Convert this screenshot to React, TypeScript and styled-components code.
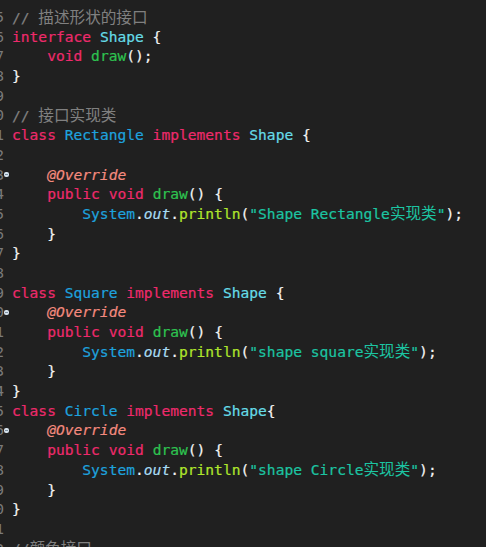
import React from "react";
import styled, { createGlobalStyle } from "styled-components";

const Global = createGlobalStyle`
  html, body { margin: 0; padding: 0; background: #202020; }
  body { overflow: hidden; }
`;

type Kind =
  | "plain"
  | "comment"
  | "keyword"
  | "iface"
  | "cls"
  | "method"
  | "anno"
  | "field"
  | "call"
  | "str";

const colors: Record<Kind, string> = {
  plain: "#f4f4f4",
  comment: "#808080",
  keyword: "#ee2a6c",
  iface: "#66dce8",
  cls: "#1ea2de",
  method: "#2ec350",
  anno: "#f48a7e",
  field: "#a8dcf4",
  call: "#afe62c",
  str: "#1cc4a2",
};

const Editor = styled.div`
  width: 486px;
  height: 547px;
  overflow: hidden;
  background: #202020;
  padding-top: 7px;
  box-sizing: border-box;
  font-family: "DejaVu Sans Mono", "Liberation Mono", "Noto Sans CJK SC", monospace;
  font-size: 14.6px;
`;

const Row = styled.div`
  display: flex;
  align-items: center;
  height: 19.7px;
  line-height: 19.7px;
`;

const LineNo = styled.div`
  width: 4px;
  display: flex;
  justify-content: flex-end;
  overflow: hidden;
  color: #7a7a7a;
  flex: none;
`;

const FoldSlot = styled.div`
  width: 8px;
  height: 100%;
  display: flex;
  align-items: center;
  flex: none;
`;

const FoldMark = styled.span`
  width: 5px;
  height: 5px;
  border-radius: 2px;
  background: #d6e2ec;
  display: flex;
  align-items: center;
  justify-content: center;
  margin-top: 1px;
  &::after {
    content: "";
    width: 3px;
    height: 1px;
    background: #7c8fa0;
  }
`;

const Code = styled.div`
  white-space: pre;
  color: ${colors.plain};
  -webkit-text-stroke: 0.2px currentColor;
`;

const Tok = styled.span<{ $kind: Kind; $italic?: boolean }>`
  color: ${(p) => colors[p.$kind]};
  font-style: ${(p) => (p.$italic ? "italic" : "normal")};
`;

const Cjk = styled.span`
  font-family: "Noto Sans CJK SC", sans-serif;
  font-size: 15.6px;
  -webkit-text-stroke: 0;
`;

type Piece = [Kind, string] | [Kind, string, "i"] | [Kind, string, "cjk"];

const k = (s: string): Piece => ["keyword", s];
const p = (s: string): Piece => ["plain", s];

const printLine = (before: string, after: string): Piece[] => [
  p("        "),
  ["cls", "System"],
  p("."),
  ["field", "out", "i"],
  p("."),
  ["call", "println"],
  p("("),
  ["str", '"' + before],
  ["str", after, "cjk"],
  ["str", '"'],
  p(");"),
];

const overrideLine: Piece[] = [p("    "), ["anno", "@Override", "i"]];
const publicLine: Piece[] = [p("    "), k("public"), p(" "), k("void"), p(" "), ["method", "draw"], p("() {")];

const lines: { n: number; fold?: boolean; code: Piece[] }[] = [
  { n: 15, code: [["comment", "// "], ["comment", "描述形状的接口", "cjk"]] },
  { n: 16, code: [k("interface"), p(" "), ["iface", "Shape"], p(" {")] },
  { n: 17, code: [p("    "), k("void"), p(" "), ["method", "draw"], p("();")] },
  { n: 18, code: [p("}")] },
  { n: 19, code: [] },
  { n: 20, code: [["comment", "// "], ["comment", "接口实现类", "cjk"]] },
  { n: 21, code: [k("class"), p(" "), ["cls", "Rectangle"], p(" "), k("implements"), p(" "), ["iface", "Shape"], p(" {")] },
  { n: 22, code: [] },
  { n: 23, fold: true, code: overrideLine },
  { n: 24, code: publicLine },
  { n: 25, code: printLine("Shape Rectangle", "实现类") },
  { n: 26, code: [p("    }")] },
  { n: 27, code: [p("}")] },
  { n: 28, code: [] },
  { n: 29, code: [k("class"), p(" "), ["cls", "Square"], p(" "), k("implements"), p(" "), ["iface", "Shape"], p(" {")] },
  { n: 30, fold: true, code: overrideLine },
  { n: 31, code: publicLine },
  { n: 32, code: printLine("shape square", "实现类") },
  { n: 33, code: [p("    }")] },
  { n: 34, code: [p("}")] },
  { n: 35, code: [k("class"), p(" "), ["cls", "Circle"], p(" "), k("implements"), p(" "), ["iface", "Shape"], p("{")] },
  { n: 36, fold: true, code: overrideLine },
  { n: 37, code: publicLine },
  { n: 38, code: printLine("shape Circle", "实现类") },
  { n: 39, code: [p("    }")] },
  { n: 40, code: [p("}")] },
  { n: 41, code: [] },
  { n: 42, code: [["comment", "//"], ["comment", "颜色接口", "cjk"]] },
];

export default function App() {
  return (
    <>
      <Global />
      <Editor>
        {lines.map((line) => (
          <Row key={line.n}>
            <LineNo>{line.n}</LineNo>
            <FoldSlot>{line.fold ? <FoldMark /> : null}</FoldSlot>
            <Code>
              {line.code.map(([kind, text, mod], i) =>
                mod === "cjk" ? (
                  <Tok key={i} $kind={kind}>
                    <Cjk>{text}</Cjk>
                  </Tok>
                ) : (
                  <Tok key={i} $kind={kind} $italic={mod === "i"}>
                    {text}
                  </Tok>
                )
              )}
            </Code>
          </Row>
        ))}
      </Editor>
    </>
  );
}
